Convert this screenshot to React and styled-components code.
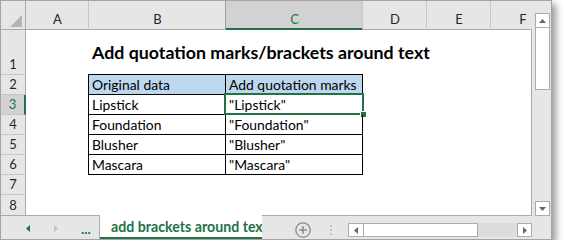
import React from 'react';
import styled, { createGlobalStyle, css } from 'styled-components';

const GREEN = '#217346';
const FONT = 'Lato, "Open Sans", "Liberation Sans", sans-serif';
const LINE = '#ababab';
const SEP = '#c6c6c6';

const GlobalStyle = createGlobalStyle`
  html, body { margin: 0; padding: 0; background: #ffffff; }
  body { font-family: ${FONT}; }
  *, *::before, *::after { box-sizing: border-box; }
`;

const Window = styled.div`
  display: flex;
  width: 552px;
  height: 240px;
  border: 1px solid #a4a4a4;
  background: #e6e6e6;
  box-shadow: 4px 4px 7px rgba(0, 0, 0, 0.4);
`;

const Main = styled.div`
  display: flex;
  flex-direction: column;
  width: 531px;
`;

const HeaderRow = styled.div`
  display: flex;
  height: 29px;
`;

const Corner = styled.div`
  width: 25px;
  display: flex;
  justify-content: flex-end;
  align-items: flex-end;
  padding: 0 3px 2px 0;
  border-right: 1px solid ${LINE};
  border-bottom: 1px solid ${LINE};
`;

const ColHeader = styled.div`
  width: ${(p) => p.$w}px;
  display: flex;
  align-items: flex-end;
  overflow: hidden;
  border-bottom: 1px solid ${LINE};
  border-right: ${(p) => (p.$last ? 'none' : `1px solid ${SEP}`)};
  font-size: 13px;
  line-height: 19px;
  color: #262626;
  ${(p) =>
    p.$active &&
    css`
      background: #d2d2d2;
      color: ${GREEN};
      border-bottom-color: ${GREEN};
      box-shadow: inset 0 -1px 0 ${GREEN}, -1px 0 0 #9e9e9e;
    `}
`;

const ColLabel = styled.span`
  flex: none;
  width: ${(p) => p.$span}px;
  text-align: center;
`;

const Body = styled.div`
  display: flex;
  height: 185px;
`;

const RowHeaders = styled.div`
  display: flex;
  flex-direction: column;
  width: 25px;
`;

const RowHeader = styled.div`
  height: ${(p) => p.$h}px;
  display: flex;
  justify-content: center;
  align-items: flex-end;
  border-right: 1px solid ${LINE};
  border-bottom: ${(p) => (p.$last ? 'none' : `1px solid ${SEP}`)};
  font-size: 13px;
  line-height: 19px;
  color: #262626;
  ${(p) =>
    p.$active &&
    css`
      background: #d2d2d2;
      color: ${GREEN};
      border-right: 2px solid ${GREEN};
    `}
`;

const Cells = styled.div`
  flex: 1;
  display: grid;
  grid-template-columns: 63px 137px 137px 64px 64px 40px;
  grid-template-rows: 45px repeat(7, 20px);
  background: #ffffff;
  border-right: 1px solid ${LINE};
`;

const Title = styled.div`
  grid-column: 2 / -1;
  grid-row: 1;
  align-self: end;
  padding: 0 0 12px 3px;
  font-size: 17.8px;
  font-weight: 700;
  line-height: 21px;
  white-space: nowrap;
  color: #000;
`;

const Table = styled.div`
  grid-column: 2 / 4;
  grid-row: 2 / 7;
  margin: -1px 0 0 -1px;
  display: grid;
  grid-template-columns: 137px 137px;
  grid-template-rows: repeat(5, 20px);
  border-top: 1px solid #000;
  border-left: 1px solid #000;
`;

const TableCell = styled.div`
  position: relative;
  border-right: 1px solid #000;
  border-bottom: 1px solid #000;
  padding-left: 3px;
  font-size: 13.9px;
  line-height: 19px;
  white-space: nowrap;
  color: #000;
  background: ${(p) => (p.$head ? '#bdd7ee' : 'transparent')};
`;

const Selection = styled.div`
  position: absolute;
  top: -2px;
  left: -2px;
  right: -2px;
  bottom: -1px;
  border: 2px solid ${GREEN};
  pointer-events: none;
`;

const FillHandle = styled.div`
  position: absolute;
  right: -5px;
  bottom: -5px;
  width: 7px;
  height: 7px;
  background: ${GREEN};
  border: 1px solid #ffffff;
`;

const TabBar = styled.div`
  display: flex;
  height: 24px;
`;

const Nav = styled.div`
  width: 99px;
  display: flex;
  align-items: center;
  padding: 2px 0 0 25px;
  border-top: 1px solid ${LINE};
  border-right: 1px solid ${LINE};
`;

const NavButton = styled.span`
  display: flex;
  width: ${(p) => p.$w}px;
`;

const More = styled.span`
  font-size: 13.5px;
  font-weight: 700;
  color: ${GREEN};
  line-height: 14px;
  padding-top: 1px;
  margin-left: 1px;
`;

const Tab = styled.div`
  width: 162px;
  overflow: hidden;
  white-space: nowrap;
  background: #ffffff;
  border-bottom: 2px solid ${GREEN};
  padding: 2px 0 0 11px;
  font-size: 14.2px;
  font-weight: 700;
  line-height: 20px;
  color: ${GREEN};
`;

const Rest = styled.div`
  flex: 1;
  display: flex;
  align-items: center;
  padding: 5px 0 0 33px;
  border-top: 1px solid ${LINE};
`;

const AddSheet = styled.svg`
  flex: none;
`;

const Grip = styled.div`
  display: flex;
  flex-direction: column;
  gap: 2px;
  margin-left: 19px;
`;

const GripDot = styled.span`
  width: 2px;
  height: 2px;
  background: #c4c4c4;
`;

const HScroll = styled.div`
  flex: 1;
  display: flex;
  height: 14px;
  margin-left: 16px;
`;

const ScrollBtn = styled.div`
  flex: none;
  width: ${(p) => p.$w}px;
  height: ${(p) => p.$h || 14}px;
  display: flex;
  align-items: center;
  justify-content: center;
  background: #ffffff;
  border: 1px solid ${LINE};
`;

const HThumb = styled.div`
  width: 114px;
  background: #ffffff;
  border: 1px solid ${LINE};
  border-left: none;
`;

const HTrack = styled.div`
  flex: 1;
  background: #dcdcdc;
`;

const VScroll = styled.div`
  width: 19px;
  display: flex;
  flex-direction: column;
  padding: 12px 1px 23px 3px;
`;

const VThumb = styled.div`
  height: 62px;
  background: #ffffff;
  border: 1px solid ${LINE};
  border-top: none;
`;

const VSpacer = styled.div`
  flex: 1;
`;

function Tri({ dir, color, w = 7, h = 4 }) {
  const pts = {
    up: `0,${h} ${w},${h} ${w / 2},0`,
    down: `0,0 ${w},0 ${w / 2},${h}`,
    left: `${w},0 ${w},${h} 0,${h / 2}`,
    right: `0,0 0,${h} ${w},${h / 2}`,
  }[dir];
  return (
    <svg width={w} height={h} viewBox={`0 0 ${w} ${h}`} style={{ display: 'block' }}>
      <polygon points={pts} fill={color} />
    </svg>
  );
}

const columns = [
  { id: 'A', w: 63 },
  { id: 'B', w: 137 },
  { id: 'C', w: 137, active: true },
  { id: 'D', w: 64 },
  { id: 'E', w: 64 },
  { id: 'F', w: 41, span: 64, last: true },
];

const rows = [
  { n: 1, h: 45 },
  { n: 2, h: 20 },
  { n: 3, h: 20, active: true },
  { n: 4, h: 20 },
  { n: 5, h: 20 },
  { n: 6, h: 20 },
  { n: 7, h: 20 },
  { n: 8, h: 20, last: true },
];

const data = [
  ['Lipstick', '"Lipstick"'],
  ['Foundation', '"Foundation"'],
  ['Blusher', '"Blusher"'],
  ['Mascara', '"Mascara"'],
];

export default function App() {
  return (
    <>
      <GlobalStyle />
      <Window>
        <Main>
          <HeaderRow>
            <Corner>
              <svg width="12" height="12" viewBox="0 0 12 12" style={{ display: 'block' }}>
                <polygon points="12,0 12,12 0,12" fill="#b4b4b4" />
              </svg>
            </Corner>
            {columns.map((c) => (
              <ColHeader key={c.id} $w={c.w} $active={c.active} $last={c.last}>
                <ColLabel $span={c.span || c.w}>{c.id}</ColLabel>
              </ColHeader>
            ))}
          </HeaderRow>
          <Body>
            <RowHeaders>
              {rows.map((r) => (
                <RowHeader key={r.n} $h={r.h} $active={r.active} $last={r.last}>
                  {r.n}
                </RowHeader>
              ))}
            </RowHeaders>
            <Cells>
              <Title>Add quotation marks/brackets around text</Title>
              <Table>
                <TableCell $head>Original data</TableCell>
                <TableCell $head>Add quotation marks</TableCell>
                {data.map(([a, b], i) => (
                  <React.Fragment key={a}>
                    <TableCell>{a}</TableCell>
                    <TableCell>
                      {b}
                      {i === 0 && (
                        <Selection>
                          <FillHandle />
                        </Selection>
                      )}
                    </TableCell>
                  </React.Fragment>
                ))}
              </Table>
            </Cells>
          </Body>
          <TabBar>
            <Nav>
              <NavButton $w={28}>
                <Tri dir="left" color={GREEN} w={4} h={7} />
              </NavButton>
              <NavButton $w={26}>
                <Tri dir="right" color="#c2c2c2" w={4} h={7} />
              </NavButton>
              <More>...</More>
            </Nav>
            <Tab>add brackets around text</Tab>
            <Rest>
              <AddSheet width="16" height="16" viewBox="0 0 16 16">
                <circle cx="8" cy="8" r="7.2" fill="none" stroke="#8a8a8a" strokeWidth="1.3" />
                <path d="M8 4.2v7.6M4.2 8h7.6" stroke="#8a8a8a" strokeWidth="1.6" />
              </AddSheet>
              <Grip>
                <GripDot />
                <GripDot />
                <GripDot />
              </Grip>
              <HScroll>
                <ScrollBtn $w={16}>
                  <Tri dir="left" color="#666" w={4} h={7} />
                </ScrollBtn>
                <HThumb />
                <HTrack />
                <ScrollBtn $w={15}>
                  <Tri dir="right" color="#666" w={4} h={7} />
                </ScrollBtn>
              </HScroll>
            </Rest>
          </TabBar>
        </Main>
        <VScroll>
          <ScrollBtn $w={15} $h={15}>
            <Tri dir="up" color="#666" w={7} h={4} />
          </ScrollBtn>
          <VThumb />
          <VSpacer />
          <ScrollBtn $w={15} $h={15}>
            <Tri dir="down" color="#666" w={7} h={4} />
          </ScrollBtn>
        </VScroll>
      </Window>
    </>
  );
}
